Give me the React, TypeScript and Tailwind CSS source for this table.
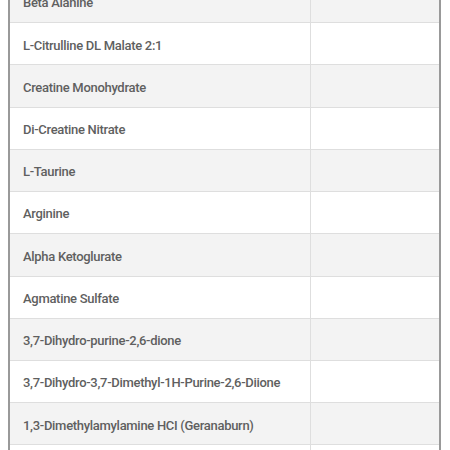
import React from 'react';

const rows = [
  'Beta Alanine',
  'L-Citrulline DL Malate 2:1',
  'Creatine Monohydrate',
  'Di-Creatine Nitrate',
  'L-Taurine',
  'Arginine',
  'Alpha Ketoglurate',
  'Agmatine Sulfate',
  '3,7-Dihydro-purine-2,6-dione',
  '3,7-Dihydro-3,7-Dimethyl-1H-Purine-2,6-Diione',
  '1,3-Dimethylamylamine HCI (Geranaburn)',
  '',
];

const App: React.FC = () => {
  return (
    <div className="h-[450px] w-[450px] overflow-hidden bg-white">
      <div
        className="ml-[8px] -mt-[20px] w-[433px] border-x-2 border-[#999999]"
        style={{ fontFamily: 'Roboto, "DejaVu Sans Condensed", sans-serif' }}
      >
        {rows.map((name, i) => (
          <div
            key={i}
            className={`flex h-[42.23px] border-t border-[#dedede] ${i % 2 === 0 ? 'bg-[#f3f3f3]' : 'bg-white'}`}
          >
            <div className="flex w-[301px] items-center whitespace-nowrap border-r border-[#dedede] pl-[13px] pt-[3px] text-[13px] font-medium tracking-[-0.3px] text-[#5f5f5f]">
              {name}
            </div>
            <div className="flex-1" />
          </div>
        ))}
      </div>
    </div>
  );
};

export default App;
